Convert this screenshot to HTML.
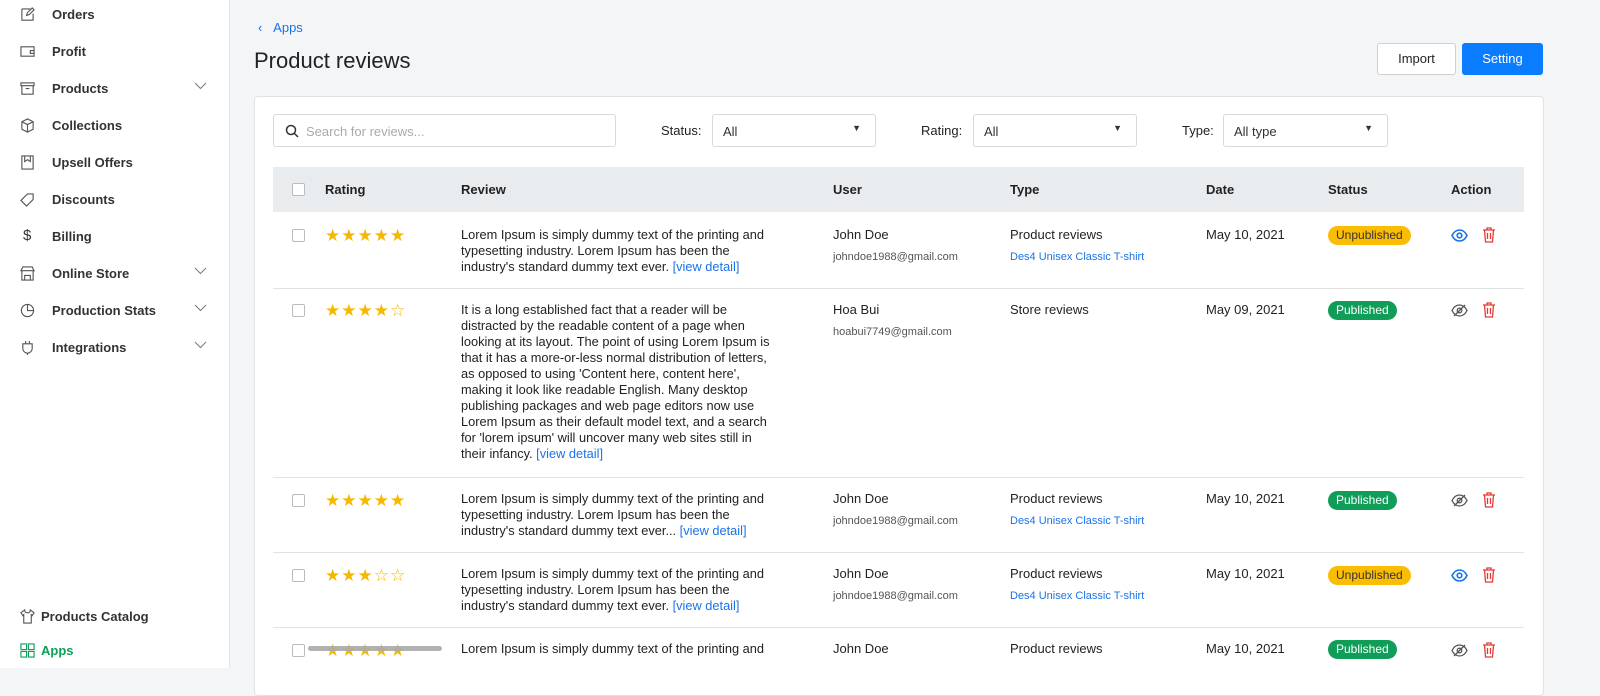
<!DOCTYPE html>
<html><head><meta charset="utf-8"><style>
*{box-sizing:border-box;margin:0;padding:0}
body{width:1600px;height:668px;overflow:hidden;background:#f4f5f7;font-family:"Liberation Sans",sans-serif;color:#222;position:relative}
.side{position:absolute;left:0;top:0;width:230px;height:668px;background:#fff;border-right:1px solid #e6e6e6}
.nav{position:absolute;left:0;width:230px;height:20px;font-size:13px;font-weight:bold;color:#333}
.nav .ic{position:absolute;left:20px;top:2px;width:15px;height:15px}
.nav .t{position:absolute;left:52px;top:2px}
.nav .ch{position:absolute;left:194px;top:3px}
.abs{position:absolute}
.card{position:absolute;left:254px;top:96px;width:1290px;height:600px;background:#fff;border:1px solid #e3e3e3;border-radius:4px}
.inp{position:absolute;height:33px;border:1px solid #d9d9d9;border-radius:3px;background:#fff;font-size:13px;color:#333}
.lbl{position:absolute;font-size:13px;color:#222}
.thead{position:absolute;left:273px;top:167px;width:1251px;height:45px;background:#e9ecef}
.th{position:absolute;top:182px;font-size:13px;font-weight:bold;color:#222}
.cb{position:absolute;width:13px;height:13px;border:1px solid #bbb;border-radius:2px;background:#fff}
.row{position:absolute;left:273px;width:1251px;border-bottom:1px solid #e3e3e3}
.txt{position:absolute;font-size:13px;line-height:16px;color:#222}
.rv{white-space:nowrap;font-size:12.8px}
.lk{color:#1a73e8}
.sm{font-size:11px;color:#555}
.stars{position:absolute;color:#f5b800;font-size:17px;letter-spacing:1px;line-height:17px}
.badge{position:absolute;height:19px;border-radius:10px;font-size:12px;line-height:19px;padding:0 8px}
.un{background:#fbbc04;color:#333}
.pu{background:#0f9d58;color:#fff}
</style></head><body>
<div class="side">
 <div class="nav" style="top:5px"><svg class="ic" viewBox="0 0 16 16" fill="none" stroke="#555" stroke-width="1.2"><path d="M2 2h9M2 2v12h12V7"/><path d="M7 9l1-3 5-5 2 2-5 5z"/></svg><span class="t">Orders</span></div>
 <div class="nav" style="top:42px"><svg class="ic" viewBox="0 0 16 16" fill="none" stroke="#555" stroke-width="1.2"><rect x="1" y="3" width="14" height="10"/><path d="M15 7h-4v3h4"/></svg><span class="t">Profit</span></div>
 <div class="nav" style="top:79px"><svg class="ic" viewBox="0 0 16 16" fill="none" stroke="#555" stroke-width="1.2"><rect x="1" y="2" width="14" height="3"/><path d="M2 5v9h12V5M6 8h4"/></svg><span class="t">Products</span><svg class="ch" width="13" height="8" viewBox="0 0 13 8" fill="none" stroke="#777"><path d="M1 1l5.5 5.5L12 1"/></svg></div>
 <div class="nav" style="top:116px"><svg class="ic" viewBox="0 0 16 16" fill="none" stroke="#555" stroke-width="1.2"><path d="M2 4l6-3 6 3v8l-6 3-6-3zM2 4l6 3 6-3M8 7v8"/></svg><span class="t">Collections</span></div>
 <div class="nav" style="top:153px"><svg class="ic" viewBox="0 0 16 16" fill="none" stroke="#555" stroke-width="1.2"><rect x="2" y="1" width="12" height="14"/><path d="M5 1v6l3-2 3 2V1"/></svg><span class="t">Upsell Offers</span></div>
 <div class="nav" style="top:190px"><svg class="ic" viewBox="0 0 16 16" fill="none" stroke="#555" stroke-width="1.2"><path d="M1 9l7-7h6v6l-7 7z"/></svg><span class="t">Discounts</span></div>
 <div class="nav" style="top:227px"><span class="ic" style="font-size:15px;font-weight:normal;top:0;left:23px">$</span><span class="t">Billing</span></div>
 <div class="nav" style="top:264px"><svg class="ic" viewBox="0 0 16 16" fill="none" stroke="#555" stroke-width="1.2"><path d="M1 5l2-4h10l2 4zM2 5v10h12V5M5 15v-5h6v5"/></svg><span class="t">Online Store</span><svg class="ch" width="13" height="8" viewBox="0 0 13 8" fill="none" stroke="#777"><path d="M1 1l5.5 5.5L12 1"/></svg></div>
 <div class="nav" style="top:301px"><svg class="ic" viewBox="0 0 16 16" fill="none" stroke="#555" stroke-width="1.2"><circle cx="8" cy="8" r="6.5"/><path d="M8 1.5V8h6.5"/></svg><span class="t">Production Stats</span><svg class="ch" width="13" height="8" viewBox="0 0 13 8" fill="none" stroke="#777"><path d="M1 1l5.5 5.5L12 1"/></svg></div>
 <div class="nav" style="top:338px"><svg class="ic" viewBox="0 0 16 16" fill="none" stroke="#555" stroke-width="1.2"><path d="M6 1v3M10 1v3M3 4h10v5a5 5 0 01-10 0zM8 14v2"/></svg><span class="t">Integrations</span><svg class="ch" width="13" height="8" viewBox="0 0 13 8" fill="none" stroke="#777"><path d="M1 1l5.5 5.5L12 1"/></svg></div>
 <div class="nav" style="top:607px"><svg class="ic" viewBox="0 0 16 16" fill="none" stroke="#555" stroke-width="1.2"><path d="M5 1L1 4l2 3 1-1v9h8V6l1 1 2-3-4-3c0 2-1 3-3 3S5 3 5 1z"/></svg><span class="t" style="left:41px">Products Catalog</span></div>
 <div class="nav" style="top:641px;color:#0f9d58"><svg class="ic" viewBox="0 0 16 16" fill="none" stroke="#0f9d58" stroke-width="1.2"><rect x="1" y="1" width="6" height="6"/><rect x="9" y="1" width="6" height="6"/><rect x="1" y="9" width="6" height="6"/><rect x="9" y="9" width="6" height="6"/></svg><span class="t" style="left:41px">Apps</span></div>
</div>

<div class="abs" style="left:258px;top:20px;color:#1a73e8;font-size:13px">&#8249;&nbsp;&nbsp;&nbsp;Apps</div>
<div class="abs" style="left:254px;top:48px;font-size:22px;color:#222">Product reviews</div>
<div class="abs" style="left:1377px;top:43px;width:79px;height:32px;background:#fff;border:1px solid #d0d0d0;border-radius:3px;font-size:13px;text-align:center;line-height:30px">Import</div>
<div class="abs" style="left:1462px;top:43px;width:81px;height:32px;background:#0a7cff;border-radius:3px;font-size:13px;color:#fff;text-align:center;line-height:32px">Setting</div>

<div class="card"></div>
<div class="inp" style="left:273px;top:114px;width:343px"><svg class="abs" style="left:11px;top:9px" width="14" height="14" viewBox="0 0 14 14" fill="none" stroke="#333" stroke-width="1.5"><circle cx="6" cy="6" r="4.5"/><path d="M9.5 9.5L13 13"/></svg><span class="abs" style="left:32px;top:9px;color:#aaa">Search for reviews...</span></div>
<div class="lbl" style="left:661px;top:123px">Status:</div>
<div class="inp" style="left:712px;top:114px;width:164px"><span class="abs" style="left:10px;top:9px">All</span><span class="abs" style="right:14px;top:8px;font-size:9px">&#9660;</span></div>
<div class="lbl" style="left:921px;top:123px">Rating:</div>
<div class="inp" style="left:973px;top:114px;width:164px"><span class="abs" style="left:10px;top:9px">All</span><span class="abs" style="right:14px;top:8px;font-size:9px">&#9660;</span></div>
<div class="lbl" style="left:1182px;top:123px">Type:</div>
<div class="inp" style="left:1223px;top:114px;width:165px"><span class="abs" style="left:10px;top:9px">All type</span><span class="abs" style="right:14px;top:8px;font-size:9px">&#9660;</span></div>

<div class="thead"></div>
<div class="cb" style="left:292px;top:183px"></div>
<div class="th" style="left:325px">Rating</div><div class="th" style="left:461px">Review</div><div class="th" style="left:833px">User</div><div class="th" style="left:1010px">Type</div><div class="th" style="left:1206px">Date</div><div class="th" style="left:1328px">Status</div><div class="th" style="left:1451px">Action</div>

<div class="row" style="top:212px;height:77px"></div>
<div class="row" style="top:289px;height:189px"></div>
<div class="row" style="top:478px;height:75px"></div>
<div class="row" style="top:553px;height:75px"></div>

<div class="cb" style="left:292px;top:229px"></div>
<div class="stars" style="left:325px;top:227px">★★★★★</div>
<div class="txt rv" style="left:461px;top:227px">Lorem Ipsum is simply dummy text of the printing and<br>typesetting industry. Lorem Ipsum has been the<br>industry's standard dummy text ever. <span class="lk">[view detail]</span></div>
<div class="txt" style="left:833px;top:227px">John Doe<br><span class="sm" style="line-height:28px">johndoe1988@gmail.com</span></div>
<div class="txt" style="left:1010px;top:227px">Product reviews<br><span class="sm lk" style="line-height:28px;color:#1a73e8">Des4 Unisex Classic T-shirt</span></div>
<div class="txt" style="left:1206px;top:227px">May 10, 2021</div>
<div class="badge un" style="left:1328px;top:226px">Unpublished</div>

<div class="cb" style="left:292px;top:304px"></div>
<div class="stars" style="left:325px;top:302px">★★★★☆</div>
<div class="txt rv" style="left:461px;top:302px">It is a long established fact that a reader will be<br>distracted by the readable content of a page when<br>looking at its layout. The point of using Lorem Ipsum is<br>that it has a more-or-less normal distribution of letters,<br>as opposed to using 'Content here, content here',<br>making it look like readable English. Many desktop<br>publishing packages and web page editors now use<br>Lorem Ipsum as their default model text, and a search<br>for 'lorem ipsum' will uncover many web sites still in<br>their infancy. <span class="lk">[view detail]</span></div>
<div class="txt" style="left:833px;top:302px">Hoa Bui<br><span class="sm" style="line-height:28px">hoabui7749@gmail.com</span></div>
<div class="txt" style="left:1010px;top:302px">Store reviews</div>
<div class="txt" style="left:1206px;top:302px">May 09, 2021</div>
<div class="badge pu" style="left:1328px;top:301px">Published</div>

<div class="cb" style="left:292px;top:494px"></div>
<div class="stars" style="left:325px;top:492px">★★★★★</div>
<div class="txt rv" style="left:461px;top:491px">Lorem Ipsum is simply dummy text of the printing and<br>typesetting industry. Lorem Ipsum has been the<br>industry's standard dummy text ever... <span class="lk">[view detail]</span></div>
<div class="txt" style="left:833px;top:491px">John Doe<br><span class="sm" style="line-height:28px">johndoe1988@gmail.com</span></div>
<div class="txt" style="left:1010px;top:491px">Product reviews<br><span class="sm" style="line-height:28px;color:#1a73e8">Des4 Unisex Classic T-shirt</span></div>
<div class="txt" style="left:1206px;top:491px">May 10, 2021</div>
<div class="badge pu" style="left:1328px;top:491px">Published</div>

<div class="cb" style="left:292px;top:569px"></div>
<div class="stars" style="left:325px;top:567px">★★★☆☆</div>
<div class="txt rv" style="left:461px;top:566px">Lorem Ipsum is simply dummy text of the printing and<br>typesetting industry. Lorem Ipsum has been the<br>industry's standard dummy text ever. <span class="lk">[view detail]</span></div>
<div class="txt" style="left:833px;top:566px">John Doe<br><span class="sm" style="line-height:28px">johndoe1988@gmail.com</span></div>
<div class="txt" style="left:1010px;top:566px">Product reviews<br><span class="sm" style="line-height:28px;color:#1a73e8">Des4 Unisex Classic T-shirt</span></div>
<div class="txt" style="left:1206px;top:566px">May 10, 2021</div>
<div class="badge un" style="left:1328px;top:566px">Unpublished</div>

<div class="cb" style="left:292px;top:644px"></div>
<div class="stars" style="left:325px;top:642px">★★★★★</div>
<div class="abs" style="left:308px;top:646px;width:134px;height:5px;border-radius:3px;background:#aaa;opacity:.9"></div>
<div class="txt rv" style="left:461px;top:641px">Lorem Ipsum is simply dummy text of the printing and</div>
<div class="txt" style="left:833px;top:641px">John Doe</div>
<div class="txt" style="left:1010px;top:641px">Product reviews</div>
<div class="txt" style="left:1206px;top:641px">May 10, 2021</div>
<div class="badge pu" style="left:1328px;top:640px">Published</div>

<svg class="abs" style="left:1451px;top:229px" width="17" height="13" viewBox="0 0 17 13" fill="none" stroke="#1a73e8" stroke-width="1.6"><path d="M1 6.5C3 2.5 6 1 8.5 1S14 2.5 16 6.5C14 10.5 11 12 8.5 12S3 10.5 1 6.5z"/><circle cx="8.5" cy="6.5" r="2.3"/></svg>
<svg class="abs" style="left:1451px;top:304px" width="17" height="13" viewBox="0 0 17 13" fill="none" stroke="#555" stroke-width="1.3"><path d="M1 6.5C3 2.5 6 1 8.5 1S14 2.5 16 6.5C14 10.5 11 12 8.5 12S3 10.5 1 6.5z"/><circle cx="8.5" cy="6.5" r="2.3"/><path d="M3 12L14 1"/></svg>
<svg class="abs" style="left:1451px;top:494px" width="17" height="13" viewBox="0 0 17 13" fill="none" stroke="#555" stroke-width="1.3"><path d="M1 6.5C3 2.5 6 1 8.5 1S14 2.5 16 6.5C14 10.5 11 12 8.5 12S3 10.5 1 6.5z"/><circle cx="8.5" cy="6.5" r="2.3"/><path d="M3 12L14 1"/></svg>
<svg class="abs" style="left:1451px;top:569px" width="17" height="13" viewBox="0 0 17 13" fill="none" stroke="#1a73e8" stroke-width="1.6"><path d="M1 6.5C3 2.5 6 1 8.5 1S14 2.5 16 6.5C14 10.5 11 12 8.5 12S3 10.5 1 6.5z"/><circle cx="8.5" cy="6.5" r="2.3"/></svg>
<svg class="abs" style="left:1451px;top:644px" width="17" height="13" viewBox="0 0 17 13" fill="none" stroke="#555" stroke-width="1.3"><path d="M1 6.5C3 2.5 6 1 8.5 1S14 2.5 16 6.5C14 10.5 11 12 8.5 12S3 10.5 1 6.5z"/><circle cx="8.5" cy="6.5" r="2.3"/><path d="M3 12L14 1"/></svg>
<svg class="abs" style="left:1482px;top:227px" width="14" height="16" viewBox="0 0 14 16" fill="none" stroke="#e53935" stroke-width="1.3"><path d="M1 3h12M5 3V1h4v2M2.5 3l1 12h7l1-12M5.5 6v6M8.5 6v6"/></svg>
<svg class="abs" style="left:1482px;top:302px" width="14" height="16" viewBox="0 0 14 16" fill="none" stroke="#e53935" stroke-width="1.3"><path d="M1 3h12M5 3V1h4v2M2.5 3l1 12h7l1-12M5.5 6v6M8.5 6v6"/></svg>
<svg class="abs" style="left:1482px;top:492px" width="14" height="16" viewBox="0 0 14 16" fill="none" stroke="#e53935" stroke-width="1.3"><path d="M1 3h12M5 3V1h4v2M2.5 3l1 12h7l1-12M5.5 6v6M8.5 6v6"/></svg>
<svg class="abs" style="left:1482px;top:567px" width="14" height="16" viewBox="0 0 14 16" fill="none" stroke="#e53935" stroke-width="1.3"><path d="M1 3h12M5 3V1h4v2M2.5 3l1 12h7l1-12M5.5 6v6M8.5 6v6"/></svg>
<svg class="abs" style="left:1482px;top:642px" width="14" height="16" viewBox="0 0 14 16" fill="none" stroke="#e53935" stroke-width="1.3"><path d="M1 3h12M5 3V1h4v2M2.5 3l1 12h7l1-12M5.5 6v6M8.5 6v6"/></svg>
</body></html>
